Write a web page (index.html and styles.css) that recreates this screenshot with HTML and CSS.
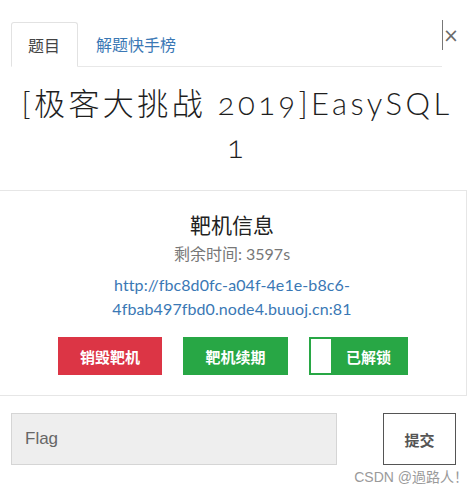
FILE: index.html
```html
<!DOCTYPE html>
<html lang="zh">
<head>
<meta charset="utf-8">
<link rel="stylesheet" href="styles.css">
</head>
<body>
<div class="modal">
  <div class="head">
    <ul class="tabs">
      <li class="tab active">题目</li>
      <li class="tab">解题快手榜</li>
    </ul>
    <button class="close">×</button>
  </div>
  <h2 class="title">[极客大挑战 2019]EasySQL<br>1</h2>
  <div class="card">
    <h4 class="card-title">靶机信息</h4>
    <p class="remain">剩余时间: 3597s</p>
    <a class="link">http://fbc8d0fc-a04f-4e1e-b8c6-<br>4fbab497fbd0.node4.buuoj.cn:81</a>
    <div class="actions">
      <button class="btn red">销毁靶机</button>
      <button class="btn green">靶机续期</button>
      <button class="btn green toggle"><span class="knob"></span><span class="lbl">已解锁</span></button>
    </div>
  </div>
  <div class="submit-row">
    <div class="flag">Flag</div>
    <button class="submit">提交</button>
  </div>
  <div class="watermark">CSDN @過路人！</div>
</div>
</body>
</html>
```
FILE: styles.css
```css
html, body { margin: 0; padding: 0; background: #fff; }
body { font-family: "Lato", "Noto Sans CJK SC", sans-serif; color: #222; width: 474px; height: 489px; overflow: hidden; }
.modal { position: relative; }
.head { display: flex; align-items: flex-start; padding-top: 22px; }
.tabs { list-style: none; margin: 0 0 0 11px; padding: 0; display: flex; width: 431px; border-bottom: 1px solid #e8e8e8; height: 44px; }
.tab { font-size: 16px; line-height: 46px; padding: 0 17px; color: #3a78b5; font-family: "Lato", "Noto Sans CJK SC", sans-serif; }
.tab.active { color: #444; border: 1px solid #e2e2e2; border-bottom: 1px solid #fff; border-radius: 3px 3px 0 0; height: 45px; box-sizing: border-box; padding: 0 0 0 16px; line-height: 46px; width: 67px; }
.tab + .tab { padding-left: 18px; }
.close { border: none; border-left: 1px solid #777; background: none; margin: -2px 0 0 0; padding: 0; height: 30px; font-size: 19px; line-height: 28px; color: #6a6a6a; font-family: "DejaVu Sans", sans-serif; }
.title { margin: 15px 0 0; text-align: center; font-weight: 300; font-size: 31px; line-height: 43px; color: #1e1e1e; font-family: "Lato", "Noto Sans CJK SC", sans-serif; letter-spacing: 3.4px; font-variant-numeric: oldstyle-nums; }
.card { margin: 22px 0 0 -2px; width: 469px; border: 1px solid #e6e6e6; border-left: none; box-sizing: border-box; height: 206px; text-align: center; padding-top: 19px; }
.card-title { margin: 0; font-weight: 400; font-size: 21px; line-height: 30px; color: #222; }
.remain { margin: 0; font-size: 16px; line-height: 28px; color: #777; }
.link { display: block; margin-top: 5px; font-size: 16px; line-height: 24px; color: #3a78b5; letter-spacing: 0.1px; }
.actions { display: flex; justify-content: center; gap: 21px; margin-top: 16px; padding-left: 2px; }
.btn { border: none; height: 38px; color: #fff; font-size: 15px; font-weight: 700; font-family: "Noto Sans CJK SC", sans-serif; padding: 0; }
.red { background: #dc3545; width: 104px; }
.green { background: #28a745; width: 105px; }
.toggle { width: 99px; display: flex; align-items: stretch; padding: 2px; box-sizing: border-box; }
.knob { width: 20px; background: #fff; }
.lbl { flex: 1; display: flex; align-items: center; justify-content: center; }
.submit-row { display: flex; align-items: flex-start; padding: 17px 0 0 11px; }
.flag { width: 326px; height: 52px; box-sizing: border-box; background: #eee; border: 1px solid #d5d5d5; font-family: "Liberation Sans", sans-serif; font-size: 17px; color: #666; line-height: 50px; padding-left: 13px; }
.submit { margin-left: 46px; width: 73px; height: 52px; box-sizing: border-box; background: #fff; border: 1px solid #555; font-family: "Noto Sans CJK SC", sans-serif; font-weight: 700; font-size: 15px; color: #555; }
.watermark { position: absolute; right: 6px; top: 466px; font-family: "Liberation Sans", "Noto Sans CJK SC", sans-serif; font-size: 14px; color: #9a9a9a; }
```
